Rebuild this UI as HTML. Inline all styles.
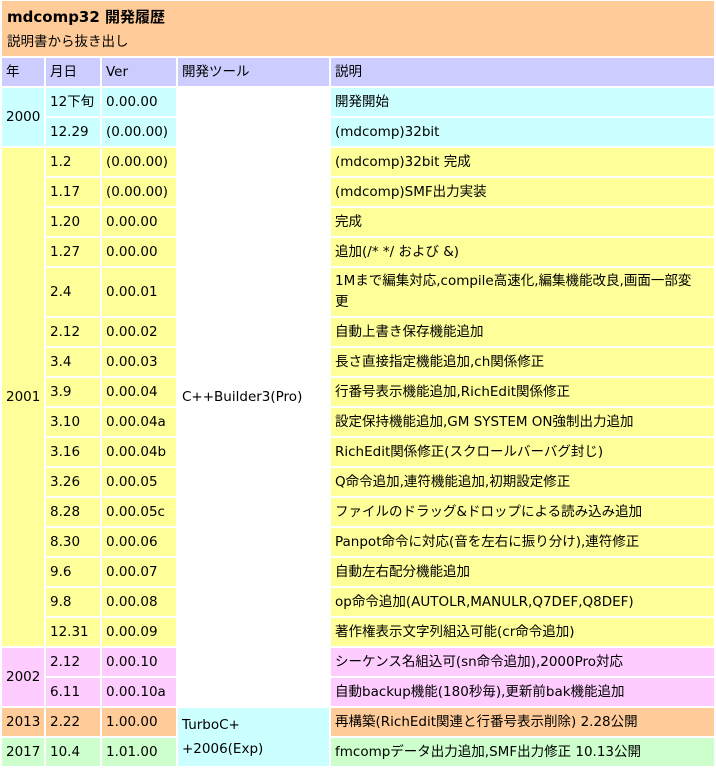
<!DOCTYPE html>
<html><head><meta charset="utf-8"><style>
body{margin:0;background:#fff;font-family:"DejaVu Sans","Noto Sans CJK JP",sans-serif;font-size:13.5px;color:#000}
table{border-spacing:2px;width:716px;table-layout:fixed;margin-top:-1px}
td,th{padding:0 4px;text-align:left;font-weight:normal;height:28px;line-height:21px}
.t{background:#ffcc99;height:55px;padding:0 5px;line-height:25px}
.t b{font-size:15px;display:block;line-height:25px;padding-top:2px}
.h{background:#ccccff}
.c{background:#ccffff}.y{background:#ffff99}.p{background:#ffccff}.o{background:#ffcc99}.g{background:#ccffcc}
</style></head><body>
<table>
<col style="width:42px"><col style="width:54px"><col style="width:74px"><col style="width:151px"><col>
<tr><td class="t" colspan="5"><b>mdcomp32 開発履歴</b>説明書から抜き出し</td></tr>
<tr class="h"><th>年</th><th>月日</th><th>Ver</th><th>開発ツール</th><th>説明</th></tr>
<tr class="c"><td rowspan="2">2000</td><td>12下旬</td><td>0.00.00</td><td rowspan="20" style="background:#fff">C++Builder3(Pro)</td><td>開発開始</td></tr>
<tr class="c"><td>12.29</td><td>(0.00.00)</td><td>(mdcomp)32bit</td></tr>
<tr class="y"><td rowspan="16">2001</td><td>1.2</td><td>(0.00.00)</td><td>(mdcomp)32bit 完成</td></tr>
<tr class="y"><td>1.17</td><td>(0.00.00)</td><td>(mdcomp)SMF出力実装</td></tr>
<tr class="y"><td>1.20</td><td>0.00.00</td><td>完成</td></tr>
<tr class="y"><td>1.27</td><td>0.00.00</td><td>追加(/* */ および &amp;)</td></tr>
<tr class="y"><td style="height:48px">2.4</td><td>0.00.01</td><td>1Mまで編集対応,compile高速化,編集機能改良,画面一部変<br>更</td></tr>
<tr class="y"><td>2.12</td><td>0.00.02</td><td>自動上書き保存機能追加</td></tr>
<tr class="y"><td>3.4</td><td>0.00.03</td><td>長さ直接指定機能追加,ch関係修正</td></tr>
<tr class="y"><td>3.9</td><td>0.00.04</td><td>行番号表示機能追加,RichEdit関係修正</td></tr>
<tr class="y"><td>3.10</td><td>0.00.04a</td><td>設定保持機能追加,GM SYSTEM ON強制出力追加</td></tr>
<tr class="y"><td>3.16</td><td>0.00.04b</td><td>RichEdit関係修正(スクロールバーバグ封じ)</td></tr>
<tr class="y"><td>3.26</td><td>0.00.05</td><td>Q命令追加,連符機能追加,初期設定修正</td></tr>
<tr class="y"><td>8.28</td><td>0.00.05c</td><td>ファイルのドラッグ&amp;ドロップによる読み込み追加</td></tr>
<tr class="y"><td>8.30</td><td>0.00.06</td><td>Panpot命令に対応(音を左右に振り分け),連符修正</td></tr>
<tr class="y"><td>9.6</td><td>0.00.07</td><td>自動左右配分機能追加</td></tr>
<tr class="y"><td>9.8</td><td>0.00.08</td><td>op命令追加(AUTOLR,MANULR,Q7DEF,Q8DEF)</td></tr>
<tr class="y"><td>12.31</td><td>0.00.09</td><td>著作権表示文字列組込可能(cr命令追加)</td></tr>
<tr class="p"><td rowspan="2">2002</td><td>2.12</td><td>0.00.10</td><td>シーケンス名組込可(sn命令追加),2000Pro対応</td></tr>
<tr class="p"><td>6.11</td><td>0.00.10a</td><td>自動backup機能(180秒毎),更新前bak機能追加</td></tr>
<tr class="o"><td>2013</td><td>2.22</td><td>1.00.00</td><td rowspan="2" class="c" style="line-height:24px">TurboC+<br>+2006(Exp)</td><td>再構築(RichEdit関連と行番号表示削除) 2.28公開</td></tr>
<tr class="g"><td>2017</td><td>10.4</td><td>1.01.00</td><td>fmcompデータ出力追加,SMF出力修正 10.13公開</td></tr>
</table>
</body></html>
